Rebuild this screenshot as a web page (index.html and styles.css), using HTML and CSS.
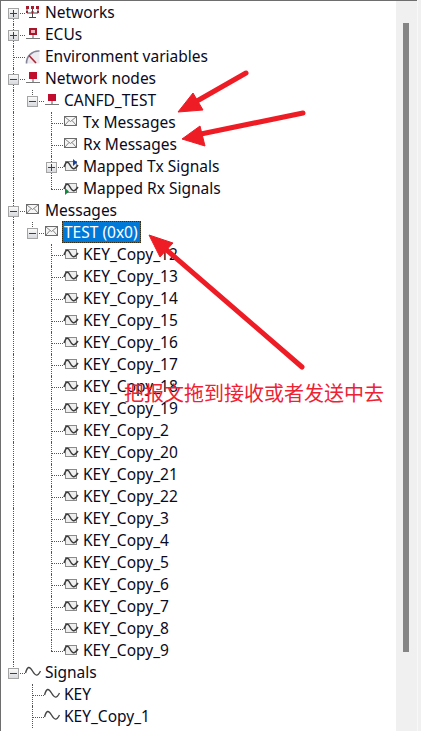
FILE: index.html
```html
<!DOCTYPE html>
<html lang="en">
<head>
  <meta charset="UTF-8" />
  <meta name="viewport" content="width=device-width, initial-scale=1.0">
  <title>Database tree</title>
  <link rel="stylesheet" href="styles.css">
</head>
<body>
<svg class="defs" width="0" height="0">
  <symbol id="i-net" viewBox="0 0 16 16">
    <path d="M2 4v4M7.500 4v8M13 4v4M2 8h11M4 12.500h7" stroke="#444" fill="none"/>
    <path d="M1 1h3v3H1zM6 1h3v3H6zM11 1h3v3h-3zM1 6h2v2H1zM6.500 6h2v2h-2zM12 6h2v2h-2z" fill="#a51d2d"/>
  </symbol>
  <symbol id="i-ecu" viewBox="0 0 16 16">
    <rect x="4" y="1" width="8" height="7" fill="#a8162c"/>
    <rect x="6" y="3" width="4" height="3" fill="#eeb4bc"/>
    <path d="M8 8v3" stroke="#555"/>
    <path d="M1 11.500h14" stroke="#777"/>
  </symbol>
  <symbol id="i-node" viewBox="0 0 16 16">
    <rect x="4" y="1" width="8" height="7" fill="#c20e2e"/>
    <path d="M8 8v3" stroke="#555"/>
    <path d="M1 11.500h14" stroke="#777"/>
  </symbol>
  <symbol id="i-env" viewBox="0 0 16 16">
    <path d="M1.500 14.500A12 12 0 0 1 14.500 2v12.500z" fill="#ecebf0"/>
    <path d="M1.500 14.500A12 12 0 0 1 14.500 2" fill="none" stroke="#85859a" stroke-width="1.600"/>
    <path d="M4 6.500l7 7.500" stroke="#b5202f" stroke-width="1.600"/>
  </symbol>
  <symbol id="i-msg" viewBox="0 0 16 16">
    <rect x="1.500" y="1.500" width="12" height="9" fill="#f6f6f6" stroke="#6a6a6a"/>
    <path d="M2 2l5.500 4.500L13 2M2 10l4-4.500M13 10L9 5.500" fill="none" stroke="#858585"/>
  </symbol>
  <symbol id="i-sigmsg" viewBox="0 0 16 16">
    <rect x="2.500" y="2.500" width="11" height="9" fill="#efefef" stroke="#8a8a8a"/>
    <path d="M1 8c2-6 4-6 6-2s4 6 8 0" fill="none" stroke="#3a3a3a" stroke-width="1.500"/>
  </symbol>
  <symbol id="i-sigtx" viewBox="0 0 16 16">
    <rect x="2.500" y="2.500" width="11" height="9" fill="#efefef" stroke="#8a8a8a"/>
    <path d="M1 8c2-6 4-6 6-2s4 6 8 0" fill="none" stroke="#3a3a3a" stroke-width="1.500"/>
    <path d="M10 0v7l4-3.500z" fill="#1a3f9c"/>
  </symbol>
  <symbol id="i-sigrx" viewBox="0 0 16 16">
    <rect x="2.500" y="2.500" width="11" height="9" fill="#efefef" stroke="#8a8a8a"/>
    <path d="M1 8c2-6 4-6 6-2s4 6 8 0" fill="none" stroke="#3a3a3a" stroke-width="1.500"/>
    <path d="M2 7v7l4-3.500z" fill="#0d8a3c"/>
  </symbol>
  <symbol id="i-sig" viewBox="0 0 16 16">
    <path d="M0.500 8c2-7 4-7 7-2s5 6 8 0" fill="none" stroke="#454545" stroke-width="1.400"/>
  </symbol>
</svg>

<div class="window">
  <div class="tree" id="tree"></div>
  <div class="scrollbar"><div class="thumb"></div></div>
</div>

<svg class="arrows" viewBox="0 0 421 731" width="421" height="731">
  <g fill="#ee1c25" stroke="#ee1c25">
    <path class="shaft" d="M246 73L190 105"/>
    <path class="shaft" d="M303 113L196 135"/>
    <path class="shaft" d="M302 367L162 246"/>
    <path d="M178 112L193 93L203 110z"/>
    <path d="M182 139L200 126L205 146z"/>
    <path d="M149 235L173 243L160 257z"/>
  </g>
</svg>
<div class="note">把报文拖到接收或者发送中去</div>

<script>
// c = guide cells before the icon
// v line, t tee, l elbow, _ empty, lowercase p/m tee + expander, F first row, L elbow + minus
const rows = [
  { c: "F", i: "net", t: "Networks" },
  { c: "p", i: "ecu", t: "ECUs" },
  { c: "t", i: "env", t: "Environment variables" },
  { c: "m", i: "node", t: "Network nodes" },
  { c: "vL", i: "node", t: "CANFD_TEST" },
  { c: "v_t", i: "msg", t: "Tx Messages" },
  { c: "v_t", i: "msg", t: "Rx Messages" },
  { c: "v_p", i: "sigtx", t: "Mapped Tx Signals" },
  { c: "v_l", i: "sigrx", t: "Mapped Rx Signals" },
  { c: "m", i: "msg", t: "Messages" },
  { c: "vL", i: "msg", t: "TEST (0x0)", sel: true }
];
["12","13","14","15","16","17","18","19","2","20","21","22","3","4","5","6","7","8"].forEach(n => {
  rows.push({ c: "v_t", i: "sigmsg", t: "KEY_Copy_" + n });
});
rows.push({ c: "v_l", i: "sigmsg", t: "KEY_Copy_9" });
rows.push({ c: "L", i: "sig", t: "Signals" });
rows.push({ c: "_t", i: "sig", t: "KEY" });
rows.push({ c: "_t", i: "sig", t: "KEY_Copy_1" });

const cellTypes = {
  v: ["v"], t: ["t"], l: ["l"], _: [""],
  p: ["t", "plus"], m: ["t", "minus"], F: ["first", "plus"], L: ["l", "minus"]
};
const tree = document.getElementById("tree");
rows.forEach(r => {
  const cells = r.c.split("").map(k => {
    const [line, exp] = cellTypes[k];
    return `<span class="cell ${line}">${exp ? `<i class="exp ${exp}"></i>` : ""}</span>`;
  }).join("");
  tree.innerHTML += `
    <div class="row">
      ${cells}
      <svg class="icon"><use href="#i-${r.i}"/></svg>
      <span class="label ${r.sel ? "selected" : ""}">${r.t}</span>
    </div>`;
});
</script>
</body>
</html>
```

FILE: styles.css
```css
* {
  box-sizing: border-box;
}
html, body {
  margin: 0;
  height: 100%;
  overflow: hidden;
  background: #fff;
}
body {
  font-family: 'Noto Sans', 'Noto Sans CJK SC', sans-serif;
  font-size: 15.5px;
  color: #0a0a1e;
  position: relative;
}
.defs {
  position: absolute;
}
.window {
  display: flex;
  height: 731px;
  width: 421px;
  padding-right: 4px;
  background: linear-gradient(to right, #fff 417px, #f0f0f0 418px);
}
.tree {
  flex: 1;
  padding: 1px 0 0 3px;
  overflow: hidden;
  border-left: 1px solid #6e6e6e;
  border-top: 1px solid #6e6e6e;
}
.row {
  display: flex;
  align-items: center;
  height: 22px;
}
.cell {
  position: relative;
  flex: none;
  width: 19px;
  height: 22px;
}
.cell.v::before, .cell.t::before, .cell.l::before, .cell.first::before {
  content: "";
  position: absolute;
  left: 9px;
  border-left: 1px dotted #555;
}
.cell.v::before, .cell.t::before {
  top: 0;
  bottom: 0;
}
.cell.l::before {
  top: 0;
  height: 11px;
}
.cell.first::before {
  top: 11px;
  bottom: 0;
}
.cell.t::after, .cell.l::after, .cell.first::after {
  content: "";
  position: absolute;
  left: 9px;
  right: -2px;
  top: 11px;
  border-top: 1px dotted #555;
}
.exp {
  position: absolute;
  z-index: 1;
  left: 4px;
  top: 6px;
  width: 11px;
  height: 11px;
  border: 1px solid #a4a4a4;
  background: linear-gradient(#fafafa, #d8dadf);
}
.exp::before, .exp::after {
  content: "";
  position: absolute;
  background: #24407f;
}
.exp::before {
  left: 1px;
  top: 4px;
  width: 7px;
  height: 1px;
}
.exp.plus::after {
  left: 4px;
  top: 1px;
  width: 1px;
  height: 7px;
}
.icon {
  flex: none;
  width: 16px;
  height: 16px;
  margin: 0 4px 0 2px;
}
.label {
  white-space: nowrap;
  line-height: 20px;
  margin-top: -2px;
}
.label.selected {
  background: #0078d7;
  color: #fff;
  outline: 1px dotted #3a2a10;
  outline-offset: -1px;
  margin: -2px 0 0 -2px;
  padding: 1px 3px 1px 2px;
}
.scrollbar {
  flex: none;
  width: 21px;
  background: #f0f0f0;
  padding: 22px 7px 79px;
  border-top: 1px solid #6e6e6e;
}
.thumb {
  height: 100%;
  width: 6px;
  background: #858585;
}
.arrows {
  position: absolute;
  left: 0;
  top: 0;
}
.shaft {
  fill: none;
  stroke-width: 5;
  stroke-linecap: round;
}
.note {
  position: absolute;
  left: 124px;
  top: 380px;
  font-size: 20px;
  line-height: 28px;
  color: #ee2233;
  white-space: nowrap;
}
```
